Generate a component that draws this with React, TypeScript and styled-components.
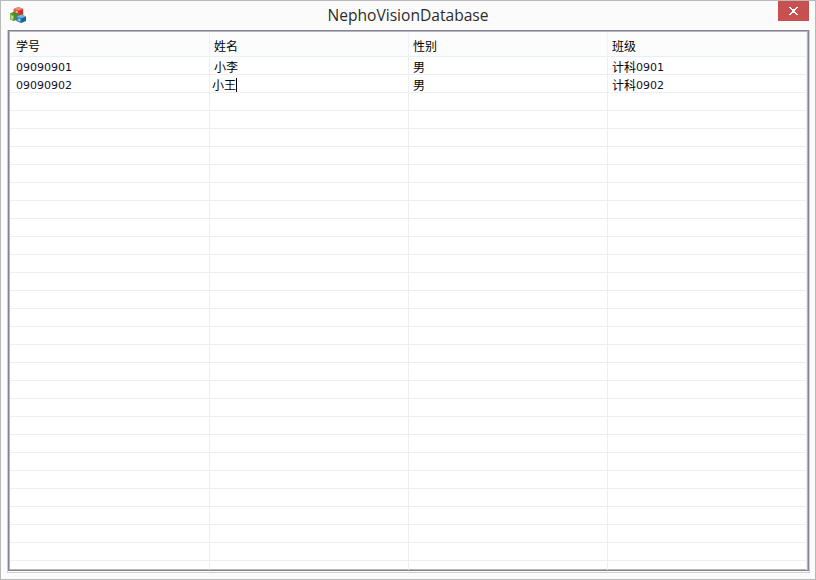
import React from "react";
import styled, { createGlobalStyle } from "styled-components";

const COLUMNS = ["学号", "姓名", "性别", "班级"];

const RECORDS = [
  ["09090901", "小李", "男", "计科0901"],
  ["09090902", "小王", "男", "计科0902"],
];

const EMPTY_ROWS = 27;

function AppIcon() {
  return (
    <svg width="16" height="16" viewBox="0 0 17 17">
      <path d="M4 2 L9 0 L14 2 L14 8 L9 10 L4 8 Z" fill="#cf3226" />
      <path d="M4 2 L9 4 L9 10 L4 8 Z" fill="#e4574a" />
      <path d="M9 0 L14 2 L9 4 L4 2 Z" fill="#ee8a78" />
      <path d="M6 4.5 h2 v3 h-2 z" fill="#f6c9c0" />
      <path d="M0 7 L4 5 L9 7 L9 13 L4 15 L0 13 Z" fill="#4f8c2c" />
      <path d="M0 7 L4 9 L4 15 L0 13 Z" fill="#86bd4c" />
      <path d="M1.5 9.5 h1.5 v3 h-1.5 z" fill="#d5e8c0" />
      <path d="M7 10 L12 8 L17 10 L17 15 L12 17 L7 15 Z" fill="#1a659e" />
      <path d="M7 10 L12 12 L12 17 L7 15 Z" fill="#3a8cc6" />
      <path d="M12 8 L17 10 L12 12 L7 10 Z" fill="#79b6df" />
      <path d="M9 12.5 h1.5 v2.5 h-1.5 z" fill="#c8e0f2" />
    </svg>
  );
}

function CloseGlyph() {
  return (
    <svg width="9" height="8" viewBox="0 0 9 8" shapeRendering="crispEdges">
      <path d="M0 0h2v1h1v1h3V1h1V0h2v1H8v1H7v1H6v2h1v1h1v1h1v1H7V7H6V6H3v1H2v1H0V7h1V6h1V5h1V3H2V2H1V1H0z" fill="#fff" />
    </svg>
  );
}

// digits sit in a different face than the CJK glyphs, like the original grid
function cellText(value: string) {
  return value
    .split(/(\d+)/)
    .filter(Boolean)
    .map((part, i) =>
      /\d/.test(part) ? <Digits key={i}>{part}</Digits> : <span key={i}>{part}</span>
    );
}

function App() {
  return (
    <>
      <GlobalStyle />
      <Window>
        <TitleBar>
          <IconSlot>
            <AppIcon />
          </IconSlot>
          <Title>NephoVisionDatabase</Title>
          <CloseSlot>
            <CloseButton aria-label="close">
              <CloseGlyph />
            </CloseButton>
          </CloseSlot>
        </TitleBar>
        <Frame>
          <FrameInner>
            <HeaderRow>
              {COLUMNS.map((name) => (
                <HeaderCell key={name}>{name}</HeaderCell>
              ))}
            </HeaderRow>
            {RECORDS.map((record, r) => (
              <Row key={record[0]}>
                {record.map((value, c) => (
                  <Cell key={c} $editing={r === 1 && c === 1}>
                    {cellText(value)}
                    {r === 1 && c === 1 && <Caret />}
                  </Cell>
                ))}
              </Row>
            ))}
            {Array.from({ length: EMPTY_ROWS }, (_, r) => (
              <Row key={r}>
                {COLUMNS.map((name) => (
                  <Cell key={name} />
                ))}
              </Row>
            ))}
          </FrameInner>
        </Frame>
      </Window>
    </>
  );
}

const GlobalStyle = createGlobalStyle`
  html, body {
    margin: 0;
    padding: 0;
    background: #ffffff;
  }
`;

const Window = styled.div`
  width: 816px;
  height: 580px;
  box-sizing: border-box;
  overflow: hidden;

  display: flex;
  flex-direction: column;

  border: 1px solid #b9b9b9;
  background: #fbfbfb;
  padding: 0 5px 6px 6px;

  font-family: "Noto Sans CJK SC", sans-serif;
  font-size: 12px;
  color: #000000;
`;

const TitleBar = styled.div`
  height: 29px;
  flex: none;
  margin-right: 1px;

  display: grid;
  grid-template-columns: 1fr auto 1fr;
  align-items: start;
`;

const IconSlot = styled.div`
  padding: 6px 0 0 3px;
`;

const Title = styled.div`
  font-family: "Open Sans", sans-serif;
  font-size: 15.6px;
  line-height: 20px;
  padding-top: 4px;
  color: #2c2c2c;
`;

const CloseSlot = styled.div`
  display: flex;
  justify-content: flex-end;
`;

const CloseButton = styled.div`
  width: 31px;
  height: 20px;
  display: flex;
  align-items: center;
  justify-content: center;
  background: #c75050;
`;

const Frame = styled.div`
  flex: 1;
  min-height: 0;
  display: flex;

  border: 1px solid #d0d0d0;
  border-top: 0;
  padding-bottom: 1px;
`;

const FrameInner = styled.div`
  flex: 1;
  min-width: 0;
  overflow: hidden;

  border: 1px solid #85858f;
  padding: 1px;
  box-shadow: inset 0 0 0 1px #b4b4c0;
  background: #ffffff;
`;

const HeaderRow = styled.div`
  height: 25px;
  box-sizing: border-box;

  display: grid;
  grid-template-columns: 200px repeat(3, 199px);

  background: #fcfcfc;
  border-bottom: 1px solid #e7effa;
`;

const HeaderCell = styled.div`
  box-sizing: border-box;
  padding: 2px 0 0 4px;

  font-size: 12px;
  line-height: 24px;

  border-right: 1px solid #eef3fb;

  &:first-child {
    padding-left: 6px;
  }
`;

const Row = styled.div`
  height: 18px;
  box-sizing: border-box;

  display: grid;
  grid-template-columns: 200px repeat(3, 199px);

  border-bottom: 1px solid #eeeeee;
`;

const Cell = styled.div<{ $editing?: boolean }>`
  box-sizing: border-box;
  padding: 1px 0 0 ${(p) => (p.$editing ? "2px" : "4px")};

  line-height: 18px;
  white-space: nowrap;

  border-right: 1px solid #eeeeee;

  &:first-child {
    padding-left: 6px;
  }
`;

const Digits = styled.span`
  font-family: "DejaVu Sans", sans-serif;
  font-size: 11px;
  vertical-align: 1px;
  color: #10102c;
`;

const Caret = styled.span`
  display: inline-block;
  width: 1px;
  height: 14px;
  vertical-align: -2px;
  background: #000000;
`;

export default App;
